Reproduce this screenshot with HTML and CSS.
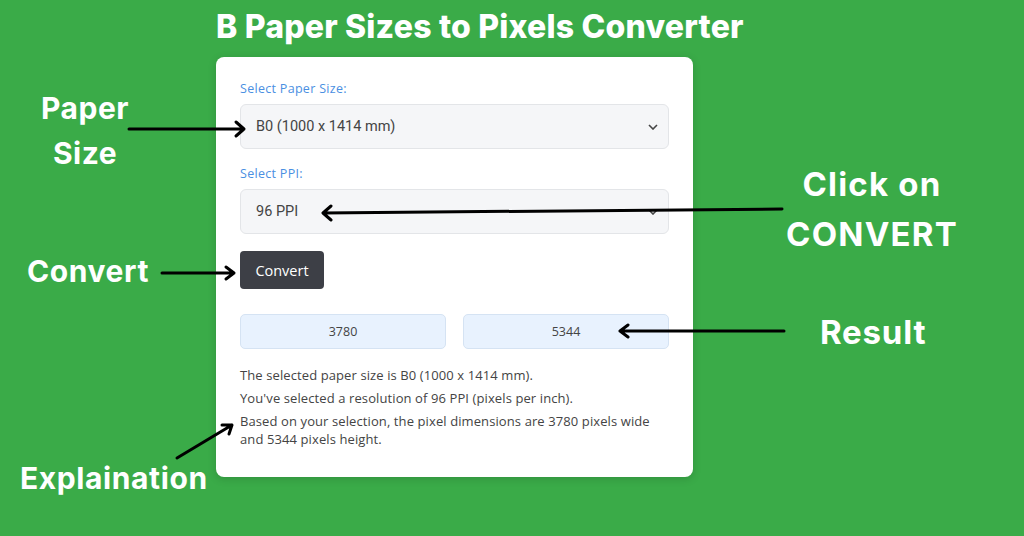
FILE: index.html
```html
<!DOCTYPE html>
<html lang="en">
<head>
<meta charset="utf-8">
<title>B Paper Sizes to Pixels Converter</title>
<link rel="stylesheet" href="styles.css">
</head>
<body>
<div class="page">
  <div class="main">
    <h1 class="title">B Paper Sizes to Pixels Converter</h1>
    <div class="card">
      <label class="field-label">Select Paper Size:</label>
      <div class="select">
        <span>B0 (1000 x 1414 mm)</span>
        <svg class="chev" width="10" height="6" viewBox="0 0 10 6"><path d="M1 1l4 4 4-4" fill="none" stroke="#333" stroke-width="1.6"/></svg>
      </div>
      <label class="field-label second">Select PPI:</label>
      <div class="select">
        <span>96 PPI</span>
        <svg class="chev" width="10" height="6" viewBox="0 0 10 6"><path d="M1 1l4 4 4-4" fill="none" stroke="#333" stroke-width="1.6"/></svg>
      </div>
      <button class="btn">Convert</button>
      <div class="results">
        <div class="result">3780</div>
        <div class="result">5344</div>
      </div>
      <div class="explain">
        <p>The selected paper size is B0 (1000 x 1414 mm).</p>
        <p>You've selected a resolution of 96 PPI (pixels per inch).</p>
        <p>Based on your selection, the pixel dimensions are 3780 pixels wide and 5344 pixels height.</p>
      </div>
    </div>
  </div>

  <div class="note note-paper">Paper<br>Size</div>
  <div class="note note-convert">Convert</div>
  <div class="note note-explain">Explaination</div>
  <div class="note note-click">Click on<br>CONVERT</div>
  <div class="note note-result">Result</div>

  <svg class="arrows" width="1024" height="536" viewBox="0 0 1024 536">
    <g fill="none" stroke="#000" stroke-width="3" stroke-linecap="round" stroke-linejoin="round">
      <path d="M129 129H244M236 122l8 7-8 7"/>
      <path d="M162 273H234M226 267l8 6-8 6"/>
      <path d="M782 209L323 213M331 206l-8 7 8 7"/>
      <path d="M784 331H620M628 325l-8 6 8 6"/>
      <path d="M177 458L232 425M222 425l10 0-3 9"/>
    </g>
  </svg>
</div>
</body>
</html>
```

FILE: styles.css
```css
* { box-sizing: border-box; }
html, body { margin: 0; padding: 0; }
body {
  background: #3aab48;
  width: 1024px;
  height: 536px;
  overflow: hidden;
  font-family: "Open Sans", "Liberation Sans", sans-serif;
}
.page {
  position: relative;
  width: 1024px;
  height: 536px;
}
.main {
  display: flex;
  flex-direction: column;
  padding-left: 216px;
}
.title {
  margin: 0;
  height: 57px;
  padding-top: 8px;
  font-family: Inter, "Open Sans", sans-serif;
  font-weight: 800;
  font-size: 32px;
  line-height: 38px;
  letter-spacing: 0.2px;
  color: #fff;
  white-space: nowrap;
}
.card {
  width: 477px;
  height: 420px;
  background: #fff;
  border-radius: 8px;
  box-shadow: 0 2px 8px rgba(0,0,0,0.15);
  padding: 23px 24px 0 24px;
  display: flex;
  flex-direction: column;
}
.field-label {
  font-size: 12.5px;
  line-height: 18px;
  letter-spacing: 0.3px;
  color: #4a8fe2;
  margin-bottom: 6px;
}
.field-label.second { margin-top: 16px; }
.select {
  height: 45px;
  background: #f5f6f8;
  border: 1px solid #e3e5e8;
  border-radius: 6px;
  display: flex;
  align-items: center;
  justify-content: space-between;
  padding: 0 10px 0 15px;
  font-family: Roboto, "Open Sans", sans-serif;
  font-size: 14.5px;
  color: #444;
}
.chev { opacity: 0.9; }
.btn {
  align-self: flex-start;
  margin-top: 17px;
  width: 84px;
  height: 38px;
  border: none;
  border-radius: 4px;
  background: #3d3f46;
  color: #fff;
  font-family: "Open Sans", sans-serif;
  font-size: 14.5px;
  padding: 0;
}
.results {
  display: grid;
  grid-template-columns: 1fr 1fr;
  gap: 17px;
  margin-top: 25px;
}
.result {
  height: 35px;
  background: #e8f2fe;
  border: 1px solid #d5e3f3;
  border-radius: 5px;
  display: flex;
  align-items: center;
  justify-content: center;
  font-size: 12.5px;
  color: #444;
}
.explain {
  margin-top: 12px;
  color: #444;
  font-size: 13px;
  letter-spacing: 0.1px;
  line-height: 18px;
}
.explain p { margin: 5px 0; }
.note {
  position: absolute;
  color: #fff;
  font-family: Inter, "Open Sans", sans-serif;
  font-weight: 700;
  white-space: nowrap;
}
.note-paper { left: 37px; top: 86px; font-size: 30px; line-height: 45px; letter-spacing: 0.5px; text-align: center; width: 96px; }
.note-convert { left: 27px; top: 251px; font-size: 30px; line-height: 40px; letter-spacing: 0.6px; }
.note-explain { left: 20px; top: 458px; font-size: 30px; line-height: 40px; letter-spacing: 0.6px; }
.note-click { left: 772px; top: 159px; font-size: 33px; line-height: 50px; letter-spacing: 1.2px; text-align: center; width: 200px; }
.note-result { left: 820px; top: 311px; font-size: 33px; line-height: 42px; letter-spacing: 0.8px; }
.arrows {
  position: absolute;
  left: 0;
  top: 0;
  pointer-events: none;
}
```
